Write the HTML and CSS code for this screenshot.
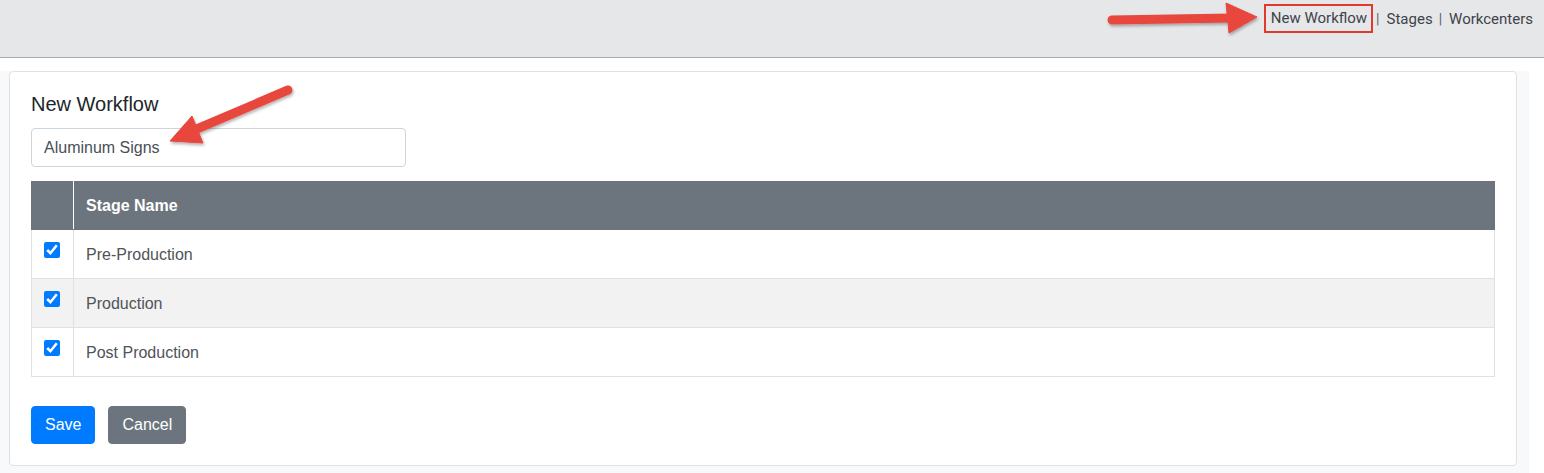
FILE: index.html
```html
<!DOCTYPE html>
<html>
<head>
<meta charset="utf-8">
<link rel="stylesheet" href="styles.css">
</head>
<body>
<header class="topbar">
  <nav class="topnav">
    <a class="nav-link nav-active">New Workflow</a>
    <span class="sep">|</span>
    <a class="nav-link">Stages</a>
    <span class="sep">|</span>
    <a class="nav-link">Workcenters</a>
  </nav>
</header>
<main class="page">
  <section class="card">
    <h5 class="card-title">New Workflow</h5>
    <input class="form-input" type="text" value="Aluminum Signs">
    <table class="stages">
      <thead>
        <tr><th class="col-check"></th><th>Stage Name</th></tr>
      </thead>
      <tbody>
        <tr><td class="col-check"><input type="checkbox" class="check" checked></td><td>Pre-Production</td></tr>
        <tr class="striped"><td class="col-check"><input type="checkbox" class="check" checked></td><td>Production</td></tr>
        <tr><td class="col-check"><input type="checkbox" class="check" checked></td><td>Post Production</td></tr>
      </tbody>
    </table>
    <div class="actions">
      <button class="btn btn-primary">Save</button>
      <button class="btn btn-secondary">Cancel</button>
    </div>
  </section>
</main>
<svg class="annotations" width="1544" height="473" viewBox="0 0 1544 473">
  <defs>
    <filter id="sh" x="-10%" y="-20%" width="130%" height="160%">
      <feDropShadow dx="1" dy="2" stdDeviation="1.5" flood-color="#000" flood-opacity="0.3"/>
    </filter>
  </defs>
  <g filter="url(#sh)" fill="#e8473d" stroke="#e8473d">
    <line x1="1112" y1="20" x2="1232" y2="18" stroke-width="9" stroke-linecap="round"/>
    <polygon points="1226,3 1257,17 1229,33" stroke-width="1" stroke-linejoin="round"/>
    <line x1="288" y1="90" x2="192" y2="131" stroke-width="9" stroke-linecap="round"/>
    <polygon points="170,141 192,116 203,143" stroke-width="1" stroke-linejoin="round"/>
  </g>
</svg>
</body>
</html>
```
FILE: styles.css
```css
* { box-sizing: border-box; }
html, body { margin: 0; padding: 0; background: #fff; }
body {
  font-family: "Liberation Sans", Arial, sans-serif;
  font-size: 16px;
  color: #212529;
  position: relative;
  width: 1544px;
  height: 473px;
  overflow: hidden;
}
.topbar {
  height: 58px;
  background: #e6e7e9;
  border-bottom: 1px solid #a8a9ab;
  display: flex;
  justify-content: flex-end;
  align-items: flex-start;
  padding: 4px 11px 0 0;
}
.topnav {
  display: flex;
  align-items: center;
  font-family: Roboto, "Liberation Sans", sans-serif;
  font-size: 15px;
  color: #3f4349;
  height: 29px;
}
.nav-link { color: #3f4349; text-decoration: none; }
.nav-active {
  border: 2px solid #e2382e;
  padding: 2px 4px 2px 5px;
  line-height: 21px;
}
.sep { color: #5c6066; margin: 0 7px 0 3px; font-size: 14px; }
.sep + .nav-link + .sep { margin: 0 7px 0 6px; }
.page {
  margin-top: 13px;
  width: 1529px;
  background: #f8f9fa;
  padding: 0 12px 20px 9px;
}
.card {
  background: #fff;
  border: 1px solid #dee2e6;
  border-radius: 4px;
  padding: 20px 21px 21px;
}
.card-title {
  margin: 0 0 12px;
  font-size: 20px;
  font-weight: 400;
  line-height: 24px;
  color: #212529;
}
.form-input {
  display: block;
  width: 375px;
  height: 39px;
  padding: 6px 12px;
  font-family: "Liberation Sans", Arial, sans-serif;
  font-size: 16px;
  color: #495057;
  border: 1px solid #ced4da;
  border-radius: 4px;
  background: #fff;
  margin-bottom: 14px;
}
.stages {
  width: 100%;
  border-collapse: collapse;
  border: 1px solid #dee2e6;
}
.stages th {
  background: #6c757d;
  color: #fff;
  text-align: left;
  font-weight: 700;
  padding: 12px;
  line-height: 23px;
  border: 1px solid #6c757d;
}
.stages th.col-check { border-right: 1px solid #fff; }
.stages td {
  padding: 13px 12px 11px;
  line-height: 24px;
  color: #4f5459;
  border: 1px solid #dee2e6;
  vertical-align: top;
}
.stages td.col-check { padding-top: 12px; padding-bottom: 12px; }
.stages .col-check { width: 42px; }
.striped td { background: #f2f2f2; }
.check {
  display: block;
  margin: 0;
  width: 16px;
  height: 16px;
  accent-color: #007bff;
}
.actions {
  display: flex;
  gap: 13px;
  margin-top: 29px;
}
.btn {
  font-family: "Liberation Sans", Arial, sans-serif;
  font-size: 16px;
  line-height: 24px;
  padding: 6px 13px;
  border-radius: 4px;
  border: 1px solid transparent;
  color: #fff;
}
.btn-primary { background: #007bff; border-color: #007bff; }
.btn-secondary { background: #6c757d; border-color: #6c757d; padding: 6px 13px; }
.annotations {
  position: absolute;
  left: 0;
  top: 0;
  pointer-events: none;
}
```
